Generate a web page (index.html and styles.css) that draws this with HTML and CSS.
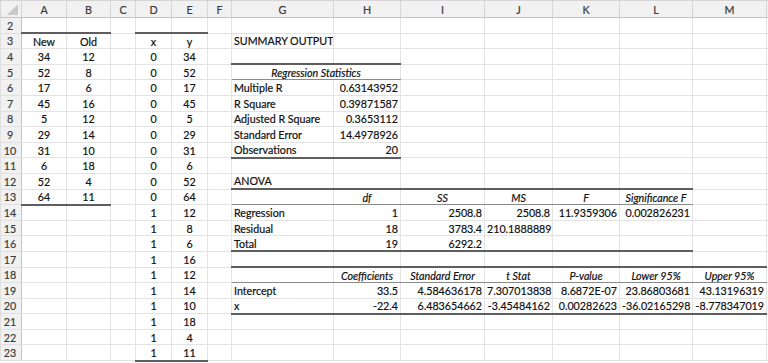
FILE: index.html
```html
<!DOCTYPE html>
<html lang="en">
<head>
  <meta charset="UTF-8">
  <title>Regression - Sheet1</title>
  <link rel="stylesheet" href="styles.css">
</head>
<body>
  <table class="sheet">
    <colgroup>
      <col class="w-hd">
      <col class="w-a"><col class="w-b"><col class="w-c"><col class="w-d"><col class="w-e"><col class="w-f">
      <col class="w-g"><col class="w-h"><col class="w-i"><col class="w-j"><col class="w-k"><col class="w-l"><col class="w-m">
      <col class="w-n">
    </colgroup>

    <!-- column letters -->
    <tr class="head">
      <th class="corner"><span class="tri"></span></th>
      <th>A</th><th>B</th><th>C</th><th>D</th><th>E</th><th>F</th>
      <th>G</th><th>H</th><th>I</th><th>J</th><th>K</th><th>L</th><th>M</th><th></th>
    </tr>

    <tr><th class="rowhd">2</th><td></td><td></td><td></td><td></td><td></td><td></td><td></td><td></td><td></td><td></td><td></td><td></td><td></td><td></td></tr>
    <tr><th class="rowhd">3</th>
      <td class="c bt">New</td><td class="c bt">Old</td><td></td><td class="c bt">x</td><td class="c bt">y</td><td></td>
      <td>SUMMARY OUTPUT</td><td></td><td></td><td></td><td></td><td></td><td></td><td></td></tr>
    <tr><th class="rowhd">4</th>
      <td class="c">34</td><td class="c">12</td><td></td><td class="c">0</td><td class="c">34</td><td></td>
      <td></td><td></td><td></td><td></td><td></td><td></td><td></td><td></td></tr>

    <!-- regression statistics -->
    <tr><th class="rowhd">5</th>
      <td class="c">52</td><td class="c">8</td><td></td><td class="c">0</td><td class="c">52</td><td></td>
      <td class="it bt bs" colspan="2">Regression Statistics</td><td></td><td></td><td></td><td></td><td></td><td></td></tr>
    <tr><th class="rowhd">6</th>
      <td class="c">17</td><td class="c">6</td><td></td><td class="c">0</td><td class="c">17</td><td></td>
      <td>Multiple R</td><td class="r">0.63143952</td><td></td><td></td><td></td><td></td><td></td><td></td></tr>
    <tr><th class="rowhd">7</th>
      <td class="c">45</td><td class="c">16</td><td></td><td class="c">0</td><td class="c">45</td><td></td>
      <td>R Square</td><td class="r">0.39871587</td><td></td><td></td><td></td><td></td><td></td><td></td></tr>
    <tr><th class="rowhd">8</th>
      <td class="c">5</td><td class="c">12</td><td></td><td class="c">0</td><td class="c">5</td><td></td>
      <td>Adjusted R Square</td><td class="r">0.3653112</td><td></td><td></td><td></td><td></td><td></td><td></td></tr>
    <tr><th class="rowhd">9</th>
      <td class="c">29</td><td class="c">14</td><td></td><td class="c">0</td><td class="c">29</td><td></td>
      <td>Standard Error</td><td class="r">14.4978926</td><td></td><td></td><td></td><td></td><td></td><td></td></tr>
    <tr><th class="rowhd">10</th>
      <td class="c">31</td><td class="c">10</td><td></td><td class="c">0</td><td class="c">31</td><td></td>
      <td class="bb">Observations</td><td class="r bb">20</td><td></td><td></td><td></td><td></td><td></td><td></td></tr>
    <tr><th class="rowhd">11</th>
      <td class="c">6</td><td class="c">18</td><td></td><td class="c">0</td><td class="c">6</td><td></td>
      <td></td><td></td><td></td><td></td><td></td><td></td><td></td><td></td></tr>

    <!-- anova -->
    <tr><th class="rowhd">12</th>
      <td class="c">52</td><td class="c">4</td><td></td><td class="c">0</td><td class="c">52</td><td></td>
      <td>ANOVA</td><td></td><td></td><td></td><td></td><td></td><td></td><td></td></tr>
    <tr><th class="rowhd">13</th>
      <td class="c bb">64</td><td class="c bb">11</td><td></td><td class="c">0</td><td class="c">64</td><td></td>
      <td class="bt bs"></td><td class="it bt bs">df</td><td class="it bt bs">SS</td><td class="it bt bs">MS</td><td class="it bt bs">F</td><td class="it bt bs">Significance F</td><td></td><td></td></tr>
    <tr><th class="rowhd">14</th>
      <td></td><td></td><td></td><td class="c">1</td><td class="c">12</td><td></td>
      <td>Regression</td><td class="r">1</td><td class="r">2508.8</td><td class="r">2508.8</td><td class="r">11.9359306</td><td class="r">0.002826231</td><td></td><td></td></tr>
    <tr><th class="rowhd">15</th>
      <td></td><td></td><td></td><td class="c">1</td><td class="c">8</td><td></td>
      <td>Residual</td><td class="r">18</td><td class="r">3783.4</td><td class="r">210.1888889</td><td></td><td></td><td></td><td></td></tr>
    <tr><th class="rowhd">16</th>
      <td></td><td></td><td></td><td class="c">1</td><td class="c">6</td><td></td>
      <td class="bb">Total</td><td class="r bb">19</td><td class="r bb">6292.2</td><td class="bb"></td><td class="bb"></td><td class="bb"></td><td></td><td></td></tr>
    <tr><th class="rowhd">17</th>
      <td></td><td></td><td></td><td class="c">1</td><td class="c">16</td><td></td>
      <td></td><td></td><td></td><td></td><td></td><td></td><td></td><td></td></tr>

    <!-- coefficients -->
    <tr><th class="rowhd">18</th>
      <td></td><td></td><td></td><td class="c">1</td><td class="c">12</td><td></td>
      <td class="bt bs"></td><td class="it bt bs">Coefficients</td><td class="it bt bs">Standard Error</td><td class="it bt bs">t Stat</td><td class="it bt bs">P-value</td><td class="it bt bs">Lower 95%</td><td class="it bt bs">Upper 95%</td><td></td></tr>
    <tr><th class="rowhd">19</th>
      <td></td><td></td><td></td><td class="c">1</td><td class="c">14</td><td></td>
      <td>Intercept</td><td class="r">33.5</td><td class="r">4.584636178</td><td class="r">7.307013838</td><td class="r">8.6872E-07</td><td class="r">23.86803681</td><td class="r">43.13196319</td><td></td></tr>
    <tr><th class="rowhd">20</th>
      <td></td><td></td><td></td><td class="c">1</td><td class="c">10</td><td></td>
      <td class="bb">x</td><td class="r bb">-22.4</td><td class="r bb">6.483654662</td><td class="r bb">-3.45484162</td><td class="r bb">0.00282623</td><td class="r bb">-36.02165298</td><td class="r bb">-8.778347019</td><td></td></tr>
    <tr><th class="rowhd">21</th>
      <td></td><td></td><td></td><td class="c">1</td><td class="c">18</td><td></td>
      <td></td><td></td><td></td><td></td><td></td><td></td><td></td><td></td></tr>
    <tr><th class="rowhd">22</th>
      <td></td><td></td><td></td><td class="c">1</td><td class="c">4</td><td></td>
      <td></td><td></td><td></td><td></td><td></td><td></td><td></td><td></td></tr>
    <tr><th class="rowhd">23</th>
      <td></td><td></td><td></td><td class="c bb">1</td><td class="c bb">11</td><td></td>
      <td></td><td></td><td></td><td></td><td></td><td></td><td></td><td></td></tr>
  </table>
</body>
</html>
```

FILE: styles.css
```css
body {
  margin: 0;
  background-color: #ffffff;
  overflow: hidden;
  font-family: Lato, "Liberation Sans", sans-serif;
  -webkit-text-stroke: 0.2px;
}

.sheet {
  border-collapse: collapse;
  table-layout: fixed;
  width: 786px;
  font-size: 10.7px;
  color: #111111;
}

/* column widths */
.w-hd { width: 21px; }
.w-a { width: 45px; }
.w-b { width: 44px; }
.w-c { width: 25px; }
.w-d { width: 36px; }
.w-e { width: 36px; }
.w-f { width: 24px; }
.w-g { width: 102px; }
.w-h { width: 67px; }
.w-i { width: 84px; }
.w-j { width: 68px; }
.w-k { width: 67px; }
.w-l { width: 73px; }
.w-m { width: 74px; }
.w-n { width: 20px; }

.sheet tr {
  height: 15.6px;
}

.sheet td {
  border: 1px solid #e3e3e3;
  padding: 0 2px;
  line-height: 13px;
  white-space: nowrap;
  overflow: hidden;
}

/* header strip */
.sheet .head {
  height: 17px;
}

.head th {
  background-color: #f1f1f1;
  border: 1px solid #d6d6d6;
  border-bottom-color: #c4c4c4;
  color: #3a3a3a;
  font-weight: normal;
  padding: 0;
}

.corner {
  position: relative;
}

.tri {
  position: absolute;
  right: 3px;
  bottom: 2px;
  width: 0;
  height: 0;
  border-left: 11px solid transparent;
  border-bottom: 11px solid #c9c9c9;
}

.rowhd {
  background-color: #f1f1f1;
  border: 1px solid #e0e0e0;
  border-right-color: #c4c4c4;
  color: #3a3a3a;
  font-weight: normal;
  text-align: center;
  padding: 0 2px 0 0;
}

/* cell alignment */
.c { text-align: center; }
.r { text-align: right; }
.it { text-align: center; font-style: italic; }

/* table borders */
.sheet .bt { border-top: 2px solid #5e5e5e; }
.sheet .bb { border-bottom: 2px solid #5e5e5e; }
.sheet .bs { border-bottom: 1px solid #8a8a8a; }
```
